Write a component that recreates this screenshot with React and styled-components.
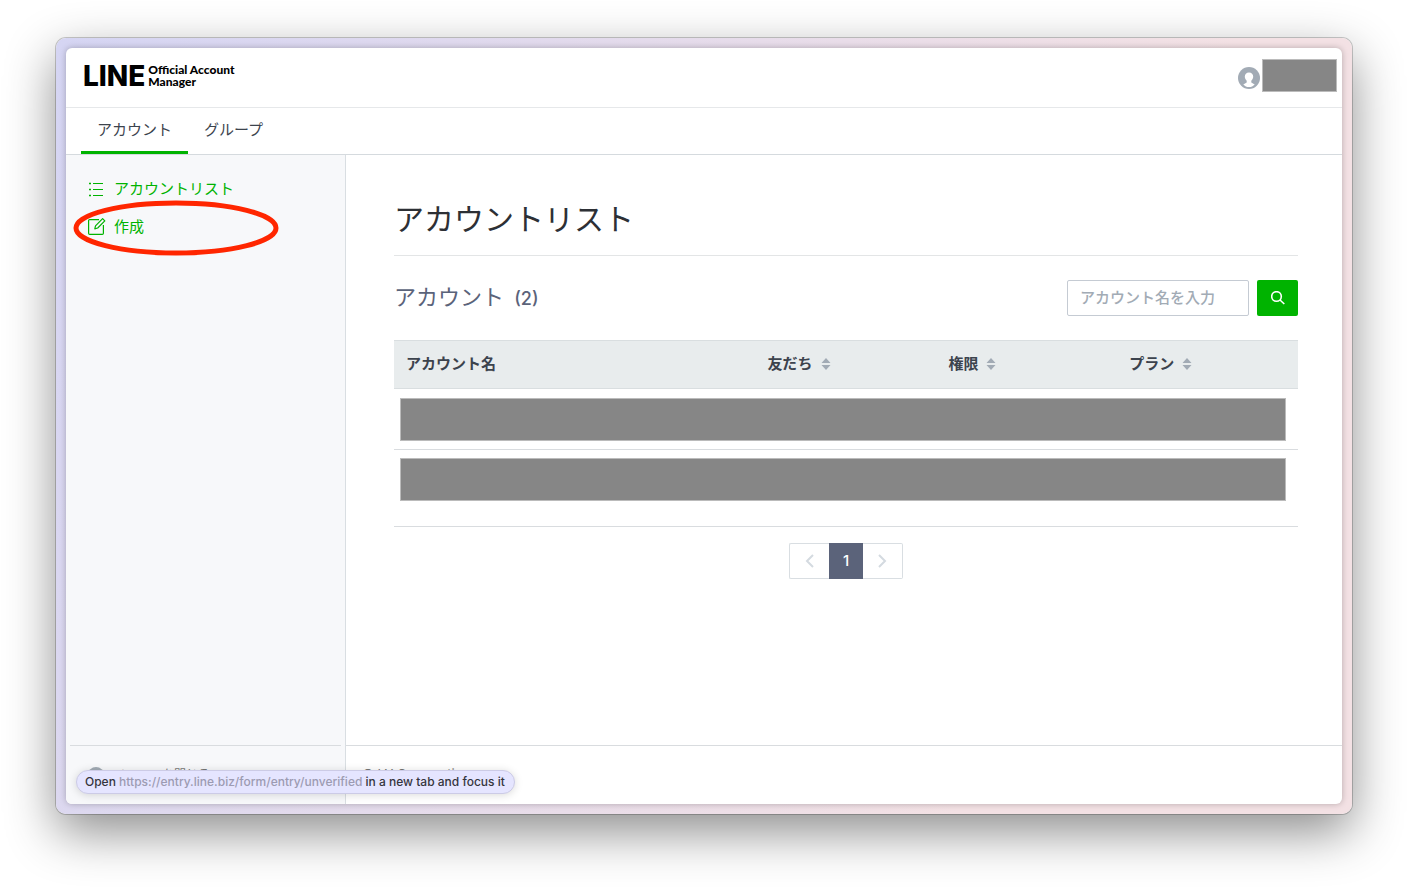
import React, { useState } from "react";
import styled, { createGlobalStyle } from "styled-components";

const GlobalStyle = createGlobalStyle`
  * {
    box-sizing: border-box;
  }

  body {
    margin: 0;
    background: #fff;
    color: #3c434d;
    font-family: Inter, "Noto Sans CJK JP", sans-serif;
    font-size: 15px;
    line-height: 24px;
  }

  button,
  input {
    font: inherit;
  }
`;

const columns = ["友だち", "権限", "プラン"];
const accounts = [1, 2];

const SortIcon = () => (
  <svg width="10" height="12" viewBox="0 0 10 12" aria-hidden="true">
    <path d="M5 0 9.500 5H.5zM5 12 .5 7h9z" fill="#a2abb5" />
  </svg>
);

const ListIcon = () => (
  <svg width="18" height="18" viewBox="0 0 18 18" aria-hidden="true">
    <path d="M5 3.500h10M5 9.500h10M5 15.500h10" stroke="#00b300" />
    <path
      d="M1 3.500h2M1 9.500h2M1 15.500h2"
      stroke="#00b300"
      strokeWidth="1.500"
    />
  </svg>
);

const EditIcon = () => (
  <svg
    width="18"
    height="18"
    viewBox="0 0 18 18"
    fill="none"
    stroke="#00b300"
    strokeWidth="1.200"
    strokeLinejoin="round"
    aria-hidden="true"
  >
    <path d="M11 1.600H1.700A1.100 1.100 0 0 0 .6 2.700v12.600a1.100 1.100 0 0 0 1.100 1.100h12.600a1.100 1.100 0 0 0 1.100-1.100V7" />
    <path d="m6.800 10.800.7-3L14.600.7l2.200 2.200L9.700 10z" />
  </svg>
);

const UserIcon = () => (
  <svg width="22" height="22" viewBox="0 0 22 22" aria-hidden="true">
    <circle cx="11" cy="11" r="11" fill="#a2abb5" />
    <path
      d="M11 5.500c-2.600 0-4.200 1.700-4.200 4.100 0 1.700.7 3.200 1.900 4.200v1.700l-3.400 1.900C6.800 19 8.800 20 11 20s4.200-1 5.700-2.600l-3.400-1.900v-1.700c1.200-1 1.900-2.500 1.900-4.200 0-2.400-1.600-4.100-4.200-4.100z"
      fill="#fff"
    />
  </svg>
);

const SearchIcon = () => (
  <svg
    width="14"
    height="14"
    viewBox="0 0 14 14"
    fill="none"
    stroke="#fff"
    strokeWidth="1.600"
    aria-hidden="true"
  >
    <circle cx="5.500" cy="5.500" r="4.800" />
    <path d="m9 9 4.300 4" />
  </svg>
);

const CollapseIcon = () => (
  <svg width="16" height="16" viewBox="0 0 16 16" aria-hidden="true">
    <circle cx="8" cy="8" r="8" fill="#a2abb5" />
    <path d="M9.500 4.500 6 8l3.500 3.500" fill="none" stroke="#fff" />
  </svg>
);

const Chevron = ({ next }) => (
  <svg width="10" height="14" viewBox="0 0 10 14" aria-hidden="true">
    <path
      d={next ? "m1 1 6 6-6 6" : "M8 1 2 7l6 6"}
      fill="none"
      stroke="#d4dae0"
      strokeWidth="2"
    />
  </svg>
);

const App = () => {
  const [keyword, setKeyword] = useState("");

  return (
    <Desktop>
      <GlobalStyle />
      <BrowserFrame>
        <Page>
          <Header>
            <Brand href="#">
              <BrandName>LINE</BrandName>
              <BrandSub>
                Official Account
                <br />
                Manager
              </BrandSub>
            </Brand>
            <User>
              <UserIcon />
              <MaskedName />
            </User>
          </Header>
          <Tabs>
            <Tab href="#" $active>
              アカウント
            </Tab>
            <Tab href="#">グループ</Tab>
          </Tabs>
          <Body>
            <Sidebar>
              <Menu>
                <MenuLink href="#">
                  <ListIcon />
                  アカウントリスト
                </MenuLink>
                <MenuLink href="#">
                  <EditIcon />
                  作成
                  <Marker viewBox="0 0 206 56" aria-hidden="true">
                    <ellipse cx="103" cy="28" rx="100" ry="25" />
                  </Marker>
                </MenuLink>
              </Menu>
              <CollapseButton>
                <CollapseIcon />
                メニューを閉じる
              </CollapseButton>
            </Sidebar>
            <Main>
              <Content>
                <Title>アカウントリスト</Title>
                <ListHeader>
                  <SubTitle>
                    アカウント <Count>(2)</Count>
                  </SubTitle>
                  <SearchForm onSubmit={(e) => e.preventDefault()}>
                    <SearchInput
                      aria-label="アカウント名"
                      placeholder="アカウント名を入力"
                      value={keyword}
                      onChange={(e) => setKeyword(e.target.value)}
                    />
                    <SearchButton aria-label="検索">
                      <SearchIcon />
                    </SearchButton>
                  </SearchForm>
                </ListHeader>
                <Table>
                  <thead>
                    <tr>
                      <HeadCell $width="40%">アカウント名</HeadCell>
                      {columns.map((column) => (
                        <HeadCell key={column} $width="20%">
                          <SortButton>
                            {column}
                            <SortIcon />
                          </SortButton>
                        </HeadCell>
                      ))}
                    </tr>
                  </thead>
                  <tbody>
                    {accounts.map((account) => (
                      <tr key={account}>
                        <MaskedCell colSpan={4}>
                          <MaskedRow />
                        </MaskedCell>
                      </tr>
                    ))}
                  </tbody>
                </Table>
                <Pagination aria-label="ページ">
                  <PageButton disabled aria-label="前へ">
                    <Chevron />
                  </PageButton>
                  <PageButton $current>1</PageButton>
                  <PageButton disabled aria-label="次へ">
                    <Chevron next />
                  </PageButton>
                </Pagination>
              </Content>
              <Footer>© LY Corporation</Footer>
            </Main>
          </Body>
          <StatusBubble>
            Open <span>https://entry.line.biz/form/entry/unverified</span> in a
            new tab and focus it
          </StatusBubble>
        </Page>
      </BrowserFrame>
    </Desktop>
  );
};

const Desktop = styled.div`
  display: flex;
  min-height: 100vh;
  padding: 38px 56px 74px;
`;

const BrowserFrame = styled.div`
  display: flex;
  flex: 1;
  min-width: 0;
  padding: 10px;
  border-radius: 10px;
  background: linear-gradient(110deg, #d5d5f3 0%, #f3e1e4 75%);
  box-shadow:
    0 0 0 1px rgba(0, 0, 0, 0.2),
    0 18px 50px rgba(0, 0, 0, 0.45);
`;

const Page = styled.div`
  position: relative;
  display: flex;
  flex: 1;
  flex-direction: column;
  min-width: 0;
  overflow: hidden;
  border-radius: 6px;
  background: #fff;
  box-shadow: 0 0 6px rgba(0, 0, 0, 0.25);
`;

const Header = styled.header`
  display: flex;
  align-items: center;
  justify-content: space-between;
  height: 60px;
  padding: 0 5px 4px 17px;
  border-bottom: 1px solid #e6e8ea;
`;

const Brand = styled.a`
  display: flex;
  align-items: center;
  gap: 3px;
  color: #000;
  text-decoration: none;
`;

const BrandName = styled.span`
  font-size: 28px;
  font-weight: 800;
  line-height: 28px;
`;

const BrandSub = styled.span`
  font-family: Lato, sans-serif;
  font-size: 12px;
  font-weight: 900;
  line-height: 12px;
`;

const User = styled.div`
  display: flex;
  align-items: flex-end;
  gap: 2px;

  svg {
    margin-bottom: 3px;
  }
`;

const MaskedName = styled.div`
  width: 75px;
  height: 33px;
  border: 1px solid #bbb;
  background: #868686;
`;

const Tabs = styled.nav`
  display: flex;
  height: 47px;
  padding: 0 15px;
  border-bottom: 1px solid #d5dade;
`;

const Tab = styled.a`
  padding: 10px 16px;
  border-bottom: 3px solid ${(props) => (props.$active ? "#00b300" : "transparent")};
  color: #3c434d;
  text-decoration: none;
`;

const Body = styled.div`
  display: flex;
  flex: 1;
`;

const Sidebar = styled.aside`
  display: flex;
  flex-direction: column;
  justify-content: space-between;
  width: 280px;
  padding: 15px 4px 0;
  border-right: 1px solid #d9dee2;
  background: #f7f8fa;
`;

const Menu = styled.nav`
  display: flex;
  flex-direction: column;
`;

const MenuLink = styled.a`
  position: relative;
  display: flex;
  align-items: center;
  gap: 8px;
  height: 38px;
  padding: 0 18px;
  color: #00b300;
  text-decoration: none;
`;

// 作成メニューを囲む赤い印
const Marker = styled.svg`
  position: absolute;
  top: -8px;
  left: 3px;
  width: 206px;
  height: 56px;
  overflow: visible;
  fill: none;
  stroke: #ff2600;
  stroke-width: 5px;
`;

const CollapseButton = styled.button`
  display: flex;
  align-items: center;
  gap: 10px;
  height: 59px;
  padding: 0 18px;
  border: 0;
  border-top: 1px solid #d9dcdf;
  background: none;
  color: #777;
  font-size: 12px;
`;

const Main = styled.main`
  display: flex;
  flex: 1;
  flex-direction: column;
  justify-content: space-between;
  min-width: 0;
`;

const Content = styled.div`
  padding: 40px 44px 24px 48px;
`;

const Title = styled.h1`
  margin: 0;
  padding-bottom: 12px;
  border-bottom: 1px solid #e3e5e6;
  color: #2d3035;
  font-size: 30px;
  font-weight: 400;
  line-height: 48px;
`;

const ListHeader = styled.div`
  display: flex;
  align-items: center;
  justify-content: space-between;
  padding: 24px 0;
`;

const SubTitle = styled.h2`
  margin: 0;
  color: #5b637a;
  font-size: 22px;
  font-weight: 400;
  line-height: 32px;
`;

const Count = styled.span`
  margin-left: 4px;
  font-size: 18px;
  font-weight: 500;
`;

const SearchForm = styled.form`
  display: flex;
  gap: 8px;
`;

const SearchInput = styled.input`
  width: 182px;
  height: 36px;
  padding: 0 12px 2px;
  border: 1px solid #c5cbd3;
  border-radius: 2px;
  outline: none;

  &::placeholder {
    color: #a2abb5;
    font-weight: 500;
  }
`;

const SearchButton = styled.button`
  display: flex;
  align-items: center;
  justify-content: center;
  width: 41px;
  height: 36px;
  padding: 0;
  border: 0;
  border-radius: 2px;
  background: #00b300;
`;

const Table = styled.table`
  width: 100%;
  border-collapse: collapse;
  table-layout: fixed;
`;

const HeadCell = styled.th`
  width: ${(props) => props.$width};
  height: 48px;
  padding: 0 12px 2px;
  border-top: 1px solid #d9dee0;
  border-bottom: 1px solid #d9dee0;
  background: #e8eced;
  font-weight: 700;
  text-align: left;
`;

const SortButton = styled.button`
  display: flex;
  align-items: center;
  gap: 8px;
  padding: 0;
  border: 0;
  background: none;
  color: inherit;
`;

const MaskedCell = styled.td`
  padding: 9px 12px 8px 6px;
  border-bottom: 1px solid #d9dcdf;

  tr:last-child > & {
    padding: 8px 12px 25px 6px;
  }
`;

const MaskedRow = styled.div`
  height: 43px;
  border: 1px solid #bbb;
  background: #868686;
`;

const Pagination = styled.nav`
  display: flex;
  justify-content: center;
  margin-top: 16px;
`;

const PageButton = styled.button`
  display: flex;
  align-items: center;
  justify-content: center;
  width: ${(props) => (props.$current ? "34px" : "40px")};
  height: 36px;
  padding: 0;
  border: 1px solid ${(props) => (props.$current ? "#5b637a" : "#d9dee2")};
  background: ${(props) => (props.$current ? "#5b637a" : "#fff")};
  color: #fff;
  font-weight: 500;

  &:first-child {
    border-right: 0;
    border-radius: 2px 0 0 2px;
  }

  &:last-child {
    border-left: 0;
    border-radius: 0 2px 2px 0;
  }
`;

const Footer = styled.footer`
  height: 59px;
  padding: 16px;
  border-top: 1px solid #d9dcdf;
  color: #777;
  font-size: 13px;
`;

const StatusBubble = styled.div`
  position: absolute;
  bottom: 10px;
  left: 10px;
  height: 24px;
  padding: 0 9px 0 8px;
  border: 1px solid #cccbe6;
  border-radius: 12px;
  background: #e5e5ff;
  box-shadow: 0 1px 8px rgba(0, 0, 0, 0.15);
  color: #35353d;
  font-size: 12px;
  font-weight: 500;
  line-height: 22px;
  white-space: nowrap;

  span {
    color: #9c9bb2;
  }
`;

export default App;
